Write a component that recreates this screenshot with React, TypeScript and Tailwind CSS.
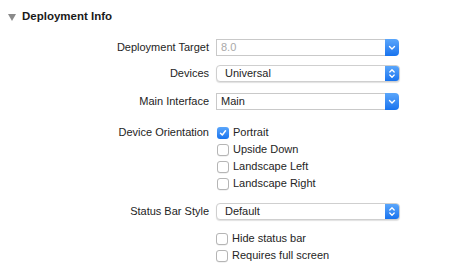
import React from 'react';

// 下拉箭头（combo box）
function ChevronDown() {
  return (
    <svg width="8" height="6" viewBox="0 0 8 6" fill="none">
      <path d="M1.5 1.5 L4 4 L6.5 1.5" stroke="white" strokeWidth="1.4" strokeLinecap="round" strokeLinejoin="round" />
    </svg>
  );
}

// 上下箭头（popup button）
function ChevronUpDown() {
  return (
    <svg width="8" height="11" viewBox="0 0 8 11" fill="none">
      <path d="M1.8 4 L4 1.8 L6.2 4" stroke="white" strokeWidth="1.3" strokeLinecap="round" strokeLinejoin="round" />
      <path d="M1.8 7 L4 9.2 L6.2 7" stroke="white" strokeWidth="1.3" strokeLinecap="round" strokeLinejoin="round" />
    </svg>
  );
}

function ComboBox({ value, disabled }: { value: string; disabled?: boolean }) {
  return (
    <div className="flex h-[17px] w-[183px]">
      <div
        className={`flex-1 flex items-center pl-[4px] border border-[#c9c9c9] border-r-0 bg-white ${
          disabled ? 'text-[#a9a9a9]' : 'text-[#242424]'
        }`}
      >
        {value}
      </div>
      <div className="w-[14px] flex items-center justify-center rounded-r-[4px] bg-gradient-to-b from-[#5aa6fb] to-[#1673ee]">
        <ChevronDown />
      </div>
    </div>
  );
}

function PopupButton({ value }: { value: string }) {
  return (
    <div className="flex h-[17px] w-[184px] rounded-[4px] border border-[#cfcfcf] shadow-[0_1px_1px_rgba(0,0,0,0.12)] bg-white overflow-hidden">
      <div className="flex-1 flex items-center pl-[8px] text-[#242424]">{value}</div>
      <div className="w-[14px] flex items-center justify-center bg-gradient-to-b from-[#5aa6fb] to-[#1673ee]">
        <ChevronUpDown />
      </div>
    </div>
  );
}

function Checkbox({ label, checked }: { label: string; checked?: boolean }) {
  return (
    <div className="flex items-center h-[17px] pl-[1px]">
      {checked ? (
        <div className="w-[12px] h-[12px] rounded-[3px] bg-gradient-to-b from-[#5aa6fb] to-[#1673ee] flex items-center justify-center">
          <svg width="8" height="8" viewBox="0 0 8 8" fill="none">
            <path d="M1.5 4.2 L3.3 6 L6.5 1.8" stroke="white" strokeWidth="1.5" strokeLinecap="round" strokeLinejoin="round" />
          </svg>
        </div>
      ) : (
        <div className="w-[12px] h-[12px] rounded-[3px] border border-[#b5b5b5] bg-white shadow-[0_0.5px_0.5px_rgba(0,0,0,0.1)]" />
      )}
      <span className="ml-[4px] text-[#242424]">{label}</span>
    </div>
  );
}

function Row({ label, children, className }: { label?: string; children: React.ReactNode; className?: string }) {
  return (
    <div className={`flex items-center ${className ?? ''}`}>
      <div className="w-[209px] text-right text-[#242424]">{label}</div>
      <div className="ml-[7px]">{children}</div>
    </div>
  );
}

export default function App() {
  return (
    <div
      className="w-[474px] h-[271px] bg-white overflow-hidden pt-[10px] text-[11px] leading-none"
      style={{ fontFamily: '"Liberation Sans", Arial, sans-serif' }}
    >
      {/* 标题 */}
      <div className="flex items-center h-[14px] pl-[8px]">
        <svg width="8" height="7" viewBox="0 0 8 7">
          <path d="M0 0 L8 0 L4 7 Z" fill="#8a8a8a" />
        </svg>
        <span className="ml-[6px] font-bold text-[11.5px] text-[#1a1a1a]">Deployment Info</span>
      </div>

      <Row label="Deployment Target" className="mt-[15px] h-[17px]">
        <ComboBox value="8.0" disabled />
      </Row>
      <Row label="Devices" className="mt-[9px] h-[17px]">
        <PopupButton value="Universal" />
      </Row>
      <Row label="Main Interface" className="mt-[11px] h-[17px]">
        <ComboBox value="Main" />
      </Row>

      {/* 设备方向 */}
      <div className="flex mt-[14px]">
        <div className="w-[209px] h-[17px] flex items-center justify-end text-[#242424]">Device Orientation</div>
        <div className="ml-[7px] flex flex-col">
          <Checkbox label="Portrait" checked />
          <Checkbox label="Upside Down" />
          <Checkbox label="Landscape Left" />
          <Checkbox label="Landscape Right" />
        </div>
      </div>

      <Row label="Status Bar Style" className="mt-[11px] h-[17px]">
        <PopupButton value="Default" />
      </Row>

      <div className="ml-[215px] mt-[10px] flex flex-col">
        <Checkbox label="Hide status bar" />
        <Checkbox label="Requires full screen" />
      </div>
    </div>
  );
}
